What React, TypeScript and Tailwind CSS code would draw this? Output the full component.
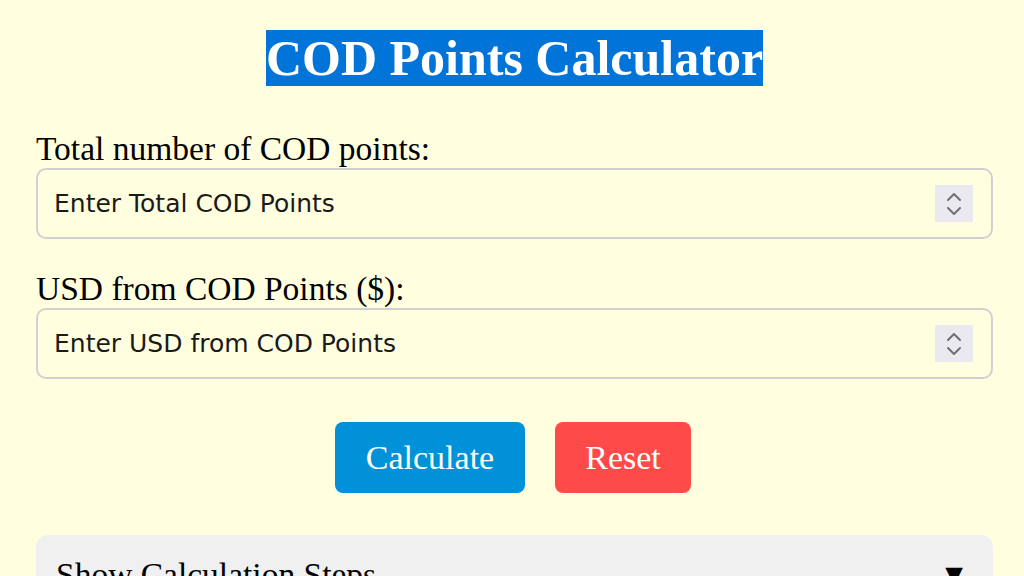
function Spinner() {
  return (
    <div className="flex h-[37px] w-[38px] items-center justify-center bg-[#e9e9ef]">
      <svg width="18" height="26" viewBox="0 0 18 26" fill="none" stroke="#707070" strokeWidth="2" strokeLinecap="round" strokeLinejoin="round">
        <polyline points="3,9 9,3 15,9" />
        <polyline points="3,17 9,23 15,17" />
      </svg>
    </div>
  );
}

function NumberField({ placeholder }: { placeholder: string }) {
  return (
    <div className="flex h-[71px] items-center rounded-[10px] border-2 border-[#d0d0d0] pl-[16px] pr-[18px]">
      <input
        type="text"
        placeholder={placeholder}
        className="min-w-0 flex-1 bg-transparent text-[25px] text-[#111] outline-none placeholder:text-[#1a1a1a] [font-family:'DejaVu_Sans',Verdana,sans-serif]"
      />
      <Spinner />
    </div>
  );
}

export default function App() {
  return (
    <div className="min-h-[576px] overflow-hidden bg-[#ffffe0] pl-[36px] pr-[31px] text-black [font-family:'Liberation_Serif','Times_New_Roman',serif]">
      <h1 className="pt-[31px] text-center text-[50px] font-bold leading-[55px]">
        <span className="bg-[#0074d9] text-white">COD Points Calculator</span>
      </h1>

      <div className="mt-[44px]">
        <label className="block text-[33.5px] leading-[38px]">Total number of COD points:</label>
        <NumberField placeholder="Enter Total COD Points" />
      </div>

      <div className="mt-[31px]">
        <label className="block text-[33.5px] leading-[38px]">USD from COD Points ($):</label>
        <NumberField placeholder="Enter USD from COD Points" />
      </div>

      <div className="mt-[43px] flex justify-center gap-[30px] pr-[3px]">
        <button className="h-[71px] w-[190px] rounded-[8px] bg-[#0091d9] text-[34px] text-white">
          Calculate
        </button>
        <button className="h-[71px] w-[136px] rounded-[8px] bg-[#ff4a4a] text-[34px] text-white">
          Reset
        </button>
      </div>

      <div className="mt-[42px] flex items-start justify-between rounded-[12px] bg-[#f0f0f0] px-[20px] pt-[21px] pb-[20px]">
        <span className="text-[33.5px] leading-[38px]">Show Calculation Steps</span>
        <span className="pr-[4px] text-[30px] leading-[38px]">▼</span>
      </div>
    </div>
  );
}
